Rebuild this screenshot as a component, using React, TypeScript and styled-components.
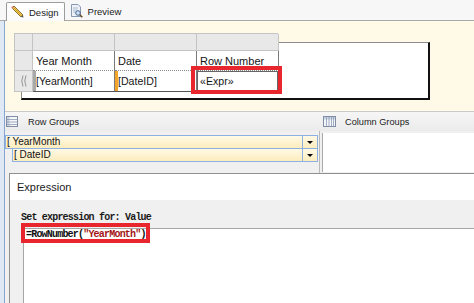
import React from "react";
import styled, { createGlobalStyle } from "styled-components";

const Global = createGlobalStyle`
  html, body { margin: 0; padding: 0; background: #fff; }
  body { font-family: "Liberation Sans", Arial, sans-serif; }
  * { box-sizing: border-box; }
`;

const Page = styled.div`
  position: relative;
  width: 474px;
  height: 303px;
  overflow: hidden;
  display: flex;
  flex-direction: column;
  background: #f0f0f0;
`;

const TabBar = styled.div`
  flex: none;
  height: 21px;
  display: flex;
  align-items: flex-end;
  padding-left: 6px;
  background: #f7f7f7;
  border-bottom: 1px solid #a8a8a8;
`;

const Tab = styled.div<{ $active?: boolean }>`
  height: 19px;
  display: flex;
  align-items: center;
  gap: 5px;
  padding: 0 5px 0 4px;
  margin-bottom: ${(p) => (p.$active ? "-1px" : "0")};
  font-size: 9.5px;
  color: #1a1a1a;
  background: ${(p) => (p.$active ? "linear-gradient(#ffffff, #fbfbfb)" : "transparent")};
  border: 1px solid ${(p) => (p.$active ? "#9c9c9c" : "transparent")};
  border-bottom: none;
  border-radius: 2px 2px 0 0;
`;

const Workspace = styled.div`
  flex: 1;
  display: flex;
  min-height: 0;
`;

const LeftStrip = styled.div`
  flex: none;
  width: 5px;
  background: #dfe9f6;
  border-right: 1px solid #88a6cd;
`;

const Main = styled.div`
  flex: 1;
  display: flex;
  flex-direction: column;
  min-width: 0;
`;

const DesignSurface = styled.div`
  flex: none;
  height: 90px;
  background: #fffae7;
  padding: 21px 0 0 16px;
`;

const BodyRect = styled.div`
  width: 409px;
  height: 58px;
  background: #fff;
  border-top: 1px solid #8c8c8c;
  border-left: 1px solid #8c8c8c;
  border-right: 2px solid #111;
  border-bottom: 2px solid #111;
`;

const Table = styled.div`
  margin: -10px 0 0 -8px;
  display: grid;
  grid-template-columns: 18px 82px 82px 82px;
  grid-template-rows: 17px 20px 21px;
  width: 264px;
  border-top: 1px solid #c4c4c4;
  border-left: 1px solid #c4c4c4;
`;

const Handle = styled.div`
  background: #e8e8e8;
  border-right: 1px solid #c4c4c4;
  border-bottom: 1px solid #c4c4c4;
  display: flex;
  align-items: center;
  justify-content: center;
`;

const Cell = styled.div<{ $header?: boolean; $mark?: string; $selected?: boolean }>`
  background: #fff;
  border-right: 1px solid #7a7a7a;
  border-bottom: 1px ${(p) => (p.$header ? "dotted #8a8a8a" : "solid #555")};
  display: flex;
  align-items: center;
  padding-left: 3px;
  font-size: ${(p) => (p.$header ? "11px" : "10.6px")};
  color: #151515;
  white-space: nowrap;
  box-shadow: ${(p) =>
    p.$mark
      ? `inset 3px 0 0 ${p.$mark}`
      : p.$selected
      ? "inset 0 0 0 1px #666"
      : "none"};
`;

const GroupHeader = styled.div`
  flex: none;
  height: 20px;
  display: flex;
  background: linear-gradient(#f6f6f6, #ebebeb);
  border-top: 1px solid #cbcbcb;
  font-size: 9.2px;
  color: #222;
`;

const HeaderPart = styled.div<{ $w?: number; $pad: number; $gap: number }>`
  ${(p) => (p.$w ? `width: ${p.$w}px; flex: none;` : "flex: 1;")}
  display: flex;
  align-items: center;
  padding-left: ${(p) => p.$pad}px;
  gap: ${(p) => p.$gap}px;
`;

const GroupsArea = styled.div`
  flex: none;
  height: 42px;
  display: flex;
`;

const LeftPane = styled.div`
  flex: none;
  width: 315px;
  padding-top: 4px;
  display: flex;
  flex-direction: column;
  border-right: 1px solid #b9b9b9;
`;

const GroupRow = styled.div<{ $indent: number }>`
  height: 14px;
  margin-left: ${(p) => p.$indent}px;
  width: ${(p) => 313 - p.$indent}px;
  & + & { margin-top: -1px; }
  display: flex;
  background: linear-gradient(#fff9e6, #fdedbd);
  border: 1px solid #8cb1e2;
  font-size: 10px;
  color: #111;
`;

const GroupLabel = styled.div`
  flex: 1;
  padding-left: 1px;
  line-height: 12px;
  white-space: nowrap;
`;

const DropBtn = styled.div`
  width: 15px;
  flex: none;
  border-left: 1px solid #8cb1e2;
  display: flex;
  align-items: center;
  justify-content: center;
`;

const Triangle = styled.div`
  width: 0;
  height: 0;
  border-left: 3px solid transparent;
  border-right: 3px solid transparent;
  border-top: 3px solid #000;
  margin-top: 1px;
`;

const RightPane = styled.div`
  flex: 1;
  margin: 2px 0 0 2px;
  height: 39px;
  background: #fff;
  border-left: 1px solid #a8a8a8;
`;

const Dialog = styled.div`
  flex: 1;
  margin-left: 4px;
  display: flex;
  flex-direction: column;
  background: #f0f0f0;
  border-top: 1px solid #8f8f8f;
  border-left: 1px solid #8f8f8f;
`;

const DialogTitle = styled.div`
  flex: none;
  height: 26px;
  display: flex;
  align-items: center;
  padding-left: 7px;
  background: #fff;
  font-size: 11px;
  color: #1b1b1b;
`;

const DialogBody = styled.div`
  flex: 1;
  display: flex;
  flex-direction: column;
  padding: 12px 0 0 11px;
`;

const Mono = styled.div`
  font-family: "Liberation Mono", "Courier New", monospace;
  font-weight: bold;
  font-size: 10px;
  letter-spacing: -0.8px;
  line-height: 12px;
  white-space: nowrap;
`;

const Label = styled(Mono)`
  color: #1a1a1a;
`;

const Editor = styled.div`
  flex: 1;
  margin: 4px 0 0 2px;
  padding: 0 0 0 2px;
  background: #fff;
  border-top: 1px solid #a6a6a6;
  border-left: 1px solid #a6a6a6;
`;

const Code = styled(Mono)`
  color: #111;
`;

const Str = styled.span`
  color: #a31515;
`;

const RedBox = styled.div<{ $x: number; $y: number; $w: number; $h: number }>`
  position: absolute;
  left: ${(p) => p.$x}px;
  top: ${(p) => p.$y}px;
  width: ${(p) => p.$w}px;
  height: ${(p) => p.$h}px;
  border: 4px solid #e8262d;
  pointer-events: none;
`;

const DesignIcon = () => (
  <svg width="13" height="14" viewBox="0 0 13 14">
    <polygon points="1,3 3,1 12,10 10,12" fill="#f1c84a" stroke="#6e5a24" strokeWidth="0.8" />
    <line x1="2" y1="2" x2="11" y2="11" stroke="#c8962a" strokeWidth="0.8" />
    <polygon points="10,12 12,10 12.5,12.5" fill="#555" />
    <rect x="0.5" y="1.5" width="2" height="2" fill="#d88" transform="rotate(45 1.5 2.5)" />
  </svg>
);

const PreviewIcon = () => (
  <svg width="13" height="14" viewBox="0 0 13 14">
    <path d="M1.5 0.5 H8 L10.5 3 V12.5 H1.5 Z" fill="#eef2f8" stroke="#7c8ea8" strokeWidth="0.9" />
    <path d="M3 4 H8 M3 6 H7 M3 8 H6" stroke="#9db0c8" strokeWidth="0.8" />
    <circle cx="8" cy="9" r="2.3" fill="#cfe3f7" stroke="#4a6a92" strokeWidth="1" />
    <line x1="9.7" y1="10.7" x2="12.3" y2="13.3" stroke="#6b4a2a" strokeWidth="1.6" />
  </svg>
);

const RowGroupsIcon = () => (
  <svg width="12" height="11" viewBox="0 0 12 11">
    <rect x="0.5" y="0.5" width="11" height="10" fill="#f4f6fa" stroke="#7f8ea6" />
    <rect x="1" y="1" width="2.5" height="9" fill="#c9d3e2" />
    <path d="M1 3.5 H11 M1 6 H11 M1 8.5 H11" stroke="#8e9cb2" strokeWidth="0.8" />
  </svg>
);

const ColGroupsIcon = () => (
  <svg width="13" height="11" viewBox="0 0 13 11">
    <rect x="0.5" y="0.5" width="12" height="10" fill="#f4f6fa" stroke="#7f8ea6" />
    <rect x="1" y="1" width="11" height="2.5" fill="#c9d3e2" />
    <path d="M3.5 1 V10 M6 1 V10 M8.5 1 V10 M10.5 1 V10" stroke="#8e9cb2" strokeWidth="0.8" />
  </svg>
);

const RowMarkerIcon = () => (
  <svg width="8" height="12" viewBox="0 0 8 12">
    <path d="M3 0.5 Q0.5 6 3 11.5" fill="none" stroke="#8c8c8c" strokeWidth="0.9" />
    <path d="M6 0.5 Q3.5 6 6 11.5" fill="none" stroke="#8c8c8c" strokeWidth="0.9" />
  </svg>
);

export default function App() {
  return (
    <>
      <Global />
      <Page>
        <TabBar>
          <Tab $active>
            <DesignIcon />
            Design
          </Tab>
          <Tab>
            <PreviewIcon />
            Preview
          </Tab>
        </TabBar>
        <Workspace>
          <LeftStrip />
          <Main>
            <DesignSurface>
              <BodyRect>
                <Table>
                  <Handle />
                  <Handle />
                  <Handle />
                  <Handle />
                  <Handle />
                  <Cell $header>Year Month</Cell>
                  <Cell $header>Date</Cell>
                  <Cell $header>Row Number</Cell>
                  <Handle>
                    <RowMarkerIcon />
                  </Handle>
                  <Cell $mark="#a9a9a9">[YearMonth]</Cell>
                  <Cell $mark="#f2a52a">[DateID]</Cell>
                  <Cell $selected>«Expr»</Cell>
                </Table>
              </BodyRect>
            </DesignSurface>
            <GroupHeader>
              <HeaderPart $w={315} $pad={1} $gap={10}>
                <RowGroupsIcon />
                Row Groups
              </HeaderPart>
              <HeaderPart $pad={3} $gap={9}>
                <ColGroupsIcon />
                Column Groups
              </HeaderPart>
            </GroupHeader>
            <GroupsArea>
              <LeftPane>
                <GroupRow $indent={0}>
                  <GroupLabel>[ YearMonth</GroupLabel>
                  <DropBtn>
                    <Triangle />
                  </DropBtn>
                </GroupRow>
                <GroupRow $indent={7}>
                  <GroupLabel>[ DateID</GroupLabel>
                  <DropBtn>
                    <Triangle />
                  </DropBtn>
                </GroupRow>
              </LeftPane>
              <RightPane />
            </GroupsArea>
            <Dialog>
              <DialogTitle>Expression</DialogTitle>
              <DialogBody>
                <Label>Set expression for: Value</Label>
                <Editor>
                  <Code>
                    =RowNumber(<Str>"YearMonth"</Str>)
                  </Code>
                </Editor>
              </DialogBody>
            </Dialog>
          </Main>
        </Workspace>
        <RedBox $x={191} $y={66} $w={91} $h={28} />
        <RedBox $x={21} $y={223} $w={129} $h={20} />
      </Page>
    </>
  );
}
